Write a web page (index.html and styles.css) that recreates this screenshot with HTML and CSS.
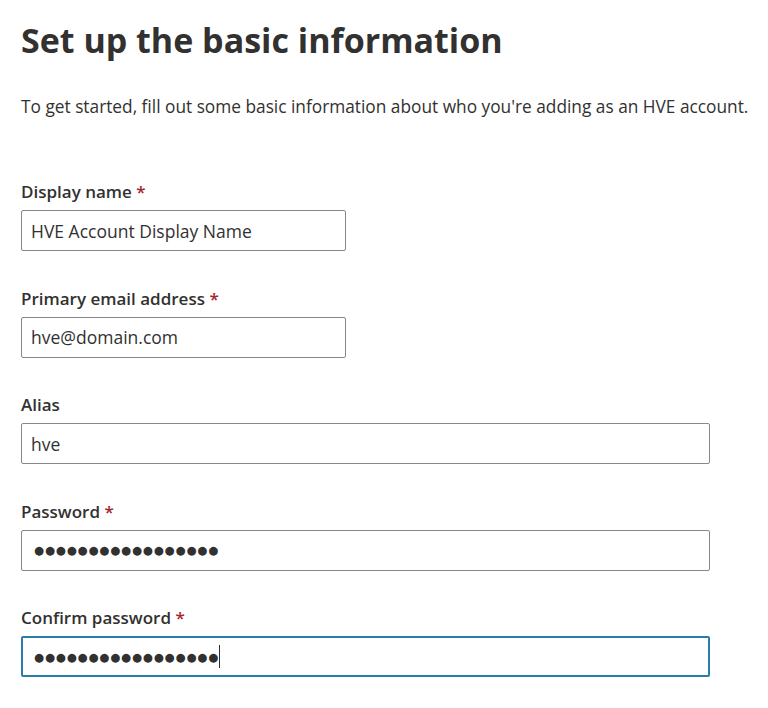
FILE: index.html
```html
<!DOCTYPE html>
<html lang="en">
<head>
    <meta charset="UTF-8">
    <meta name="viewport" content="width=device-width, initial-scale=1.0">
    <title>Set up the basic information</title>
    <link rel="stylesheet" href="styles.css">
</head>
<body>
    <div class="page">
        <h1>Set up the basic information</h1>
        <p class="intro">To get started, fill out some basic information about who you're adding as an HVE account.</p>

        <form class="form">
            <div class="field">
                <label for="displayName">Display name <span class="required">*</span></label>
                <input class="input input-short" id="displayName" type="text" value="HVE Account Display Name">
            </div>

            <div class="field">
                <label for="email">Primary email address <span class="required">*</span></label>
                <input class="input input-short" id="email" type="text" value="hve@domain.com">
            </div>

            <div class="field">
                <label for="alias">Alias</label>
                <input class="input input-wide" id="alias" type="text" value="hve">
            </div>

            <div class="field">
                <label>Password <span class="required">*</span></label>
                <div class="input input-wide password">●●●●●●●●●●●●●●●●●</div>
            </div>

            <div class="field">
                <label>Confirm password <span class="required">*</span></label>
                <div class="input input-wide password focused">●●●●●●●●●●●●●●●●●<span class="caret"></span></div>
            </div>
        </form>
    </div>
</body>
</html>
```

FILE: styles.css
```css
body {
    margin: 0;
    font-family: "Open Sans", Arial, sans-serif;
    color: #323130;
    background-color: #fff;
}

.page {
    padding: 18px 21px 0 21px;
}

h1 {
    font-size: 34px;
    font-weight: 700;
    line-height: 44px;
    margin: 0;
}

.intro {
    font-size: 17.3px;
    line-height: 22px;
    margin: 34px 0 0 0;
    white-space: nowrap;
}

.form {
    margin-top: 63px;
}

.field {
    margin-bottom: 36.5px;
}

label {
    display: block;
    font-size: 17px;
    font-weight: 600;
    line-height: 22px;
    margin-bottom: 7px;
}

.required {
    color: #a4262c;
}

.input {
    box-sizing: border-box;
    display: flex;
    align-items: center;
    height: 41px;
    padding: 0 9px;
    border: 1px solid #8a8886;
    border-radius: 2px;
    font-family: "Open Sans", Arial, sans-serif;
    font-size: 17.5px;
    color: #323130;
    background-color: #fff;
    outline: none;
}

.input-short {
    width: 325px;
}

.input-wide {
    width: 689px;
}

.password {
    font-family: "DejaVu Sans", sans-serif;
    font-size: 11.5px;
    letter-spacing: 0.85px;
    padding-left: 12px;
}

.password.focused {
    border: 2px solid #2a7cae;
    padding-left: 11px;
}

.caret {
    display: inline-block;
    width: 1px;
    height: 23px;
    margin-left: 0;
    background-color: #323130;
}
```
